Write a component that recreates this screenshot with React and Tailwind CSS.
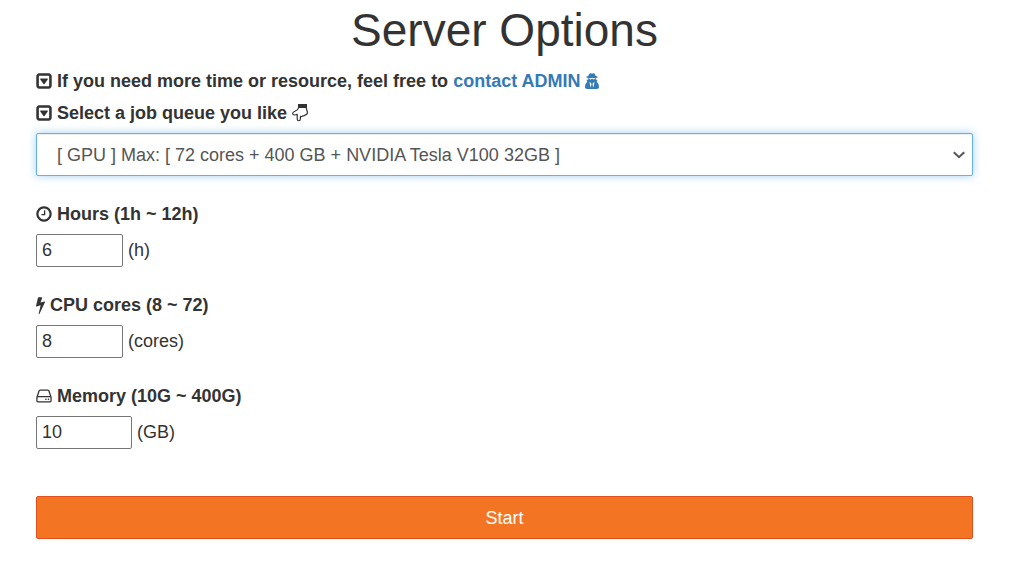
import { useState } from 'react';

// Icon outlines, drawn on a 1792 unit grid
const ICONS = {
    caret: {
        viewBox: '128 0 1536 1792',
        path: 'M1273 675q18 35-5 66l-320 448q-19 27-52 27t-52-27l-320-448q-23-31-5-66 17-35 57-35h640q40 0 57 35zm135 701v-960q0-14-9-23t-23-9h-960q-14 0-23 9t-9 23v960q0 14 9 23t23 9h960q14 0 23-9t9-23zm256-960v960q0 119-84.5 203.5t-203.5 84.5h-960q-119 0-203.5-84.5t-84.5-203.5v-960q0-119 84.5-203.5t203.5-84.5h960q119 0 203.5 84.5t84.5 203.5z',
    },
    clock: {
        viewBox: '128 0 1536 1792',
        path: 'M1024 544v448q0 14-9 23t-23 9h-320q-14 0-23-9t-9-23v-64q0-14 9-23t23-9h224v-352q0-14 9-23t23-9h64q14 0 23 9t9 23zm416 352q0-148-73-273t-198-198-273-73-273 73-198 198-73 273 73 273 198 198 273 73 273-73 198-198 73-273zm224 0q0 209-103 385.5t-279.5 279.5-385.5 103-385.5-103-279.5-279.5-103-385.5 103-385.5 279.5-279.5 385.5-103 385.5 103 279.5 279.5 103 385.5z',
    },
    bolt: {
        viewBox: '448 0 896 1792',
        path: 'M1333 566q18 20 7 44l-540 1157q-13 25-42 25-4 0-14-2-17-5-25.5-19t-4.5-30l197-808-406 101q-4 1-12 1-18 0-31-11-18-15-13-39l201-825q4-14 16-23t28-9h328q19 0 32 12.5t13 29.5q0 8-5 18l-171 463 396-98q8-2 12-2 19 0 34 15z',
    },
    drive: {
        viewBox: '128 0 1536 1792',
        path: 'M1168 1216q0 33-23.5 56.5t-56.5 23.5-56.5-23.5-23.5-56.5 23.5-56.5 56.5-23.5 56.5 23.5 23.5 56.5zm256 0q0 33-23.5 56.5t-56.5 23.5-56.5-23.5-23.5-56.5 23.5-56.5 56.5-23.5 56.5 23.5 23.5 56.5zm112 160v-320q0-13-9.5-22.5t-22.5-9.5h-1216q-13 0-22.5 9.5t-9.5 22.5v320q0 13 9.5 22.5t22.5 9.5h1216q13 0 22.5-9.5t9.5-22.5zm-1230-480h1180l-157-482q-4-13-16-21.5t-26-8.5h-782q-14 0-26 8.5t-16 21.5zm1358 160v320q0 66-47 113t-113 47h-1216q-66 0-113-47t-47-113v-320q0-25 16-75l197-606q17-53 63-86t101-33h782q55 0 101 33t63 86l197 606q16 50 16 75z',
    },
};

function Icon({ name, className = 'w-4' }) {
    const icon = ICONS[name];
    return (
        <svg viewBox={icon.viewBox} fill="currentColor" aria-hidden="true" className={`inline-block h-[18px] align-[-3px] ${className}`}>
            <path d={icon.path} />
        </svg>
    );
}

// Hat, glasses and a wide coat with an open collar
function Agent() {
    return (
        <svg viewBox="0 0 14 18" fill="currentColor" aria-hidden="true" className="inline-block h-[18px] w-3.5 align-[-3px]">
            <path d="M3.400 4C3.700 2.700 4.200 1.500 5 1.200c.7-.3 1.300.4 2 .4s1.300-.7 2-.4c.8.3 1.300 1.500 1.600 2.800 1.300.2 2.200.6 2.200 1.100s-.8.800-2 1c.1.6 0 1.200-.2 1.700H12.400l-.7 2.200c1.500.8 2.300 2.800 2.300 5 0 1.200-.9 2-2.100 2H2.100C.9 17 0 16.200 0 15c0-2.200.8-4.200 2.300-5L1.600 7.800h1.800c-.2-.5-.3-1.100-.2-1.700-1.200-.2-2-.5-2-1S2.100 4.200 3.400 4z" />
            <path d="M4.200 6.100h5.600c0 .8-.4 1.300-1.200 1.300S7.500 6.700 7.200 6.700h-.4c-.3 0-.3.7-1.200.7s-1.400-.5-1.400-1.300zM4.400 10l1.400.700.8 1.200-.9 3.800zM9.600 10l-1.400.700-.8 1.200.9 3.800z" fill="#fff" />
        </svg>
    );
}

function HandDown() {
    return (
        <svg viewBox="0 0 16 18" fill="none" stroke="currentColor" aria-hidden="true" className="inline-block h-[18px] w-4 align-[-3px]">
            <path d="M6 0h9v4H6z" fill="currentColor" stroke="none" />
            <path d="M6.500 3v1C6.200 5.600 4.700 6.500 2.900 7.300 1.200 8 .4 8.900.8 10c.6 1.400 2.600 1.100 4.400.3v4.500c0 2.600 3.200 2.600 3.200 0v-2.500c1 .4 2 .2 2.500-.6 1 .3 2 0 2.300-.9 1.400 0 2.200-.8 2.200-2.200 0-1.600-1-2.800-1-4.600V3" strokeWidth="1.200" strokeLinejoin="round" />
        </svg>
    );
}

function NumberField({ id, icon, iconClass, label, unit, min, max, inputClass, value, onChange }) {
    return (
        <div>
            <label htmlFor={id} className="mb-1 block font-bold leading-8">
                <Icon name={icon} className={iconClass} /> {label}
            </label>
            <div className="flex items-baseline gap-[5px]">
                <input
                    id={id}
                    type="number"
                    min={min}
                    max={max}
                    value={value}
                    onChange={(e) => onChange(e.target.value)}
                    className={`h-[33px] rounded-xs border border-[#767676] bg-white px-[5px] ${inputClass}`}
                />
                <span>{unit}</span>
            </div>
        </div>
    );
}

function App() {
    const [hours, setHours] = useState('6');
    const [cores, setCores] = useState('8');
    const [memory, setMemory] = useState('10');

    return (
        <main className="bg-white pr-[45px] pl-9 font-['Liberation_Sans',Arial,sans-serif] text-lg text-[#333]">
            <h1 className="mb-[5px] text-center text-[46px] leading-[60px]">Server Options</h1>

            <form onSubmit={(e) => e.preventDefault()}>
                <p className="font-bold leading-8">
                    <Icon name="caret" /> If you need more time or resource, feel free to{' '}
                    <a href="#contact" className="text-[#337ab7]">
                        contact ADMIN <Agent />
                    </a>
                </p>

                <label htmlFor="queue" className="mb-1 block font-bold leading-8">
                    <Icon name="caret" /> Select a job queue you like <HandDown />
                </label>
                <div className="grid items-center">
                    <select
                        id="queue"
                        className="col-start-1 row-start-1 h-[43px] w-full appearance-none rounded-xs border border-[#66afe9] bg-white px-5 text-[#555] shadow-[inset_0_1px_1px_rgba(0,0,0,0.075),0_0_8px_rgba(102,175,233,0.6)] outline-none"
                    >
                        <option>[ GPU ] Max: [ 72 cores + 400 GB + NVIDIA Tesla V100 32GB ]</option>
                    </select>
                    <svg viewBox="0 0 12 8" fill="none" stroke="#555" strokeWidth="2" aria-hidden="true" className="pointer-events-none col-start-1 row-start-1 mr-2 h-2 w-3 justify-self-end">
                        <path d="M.8 1.200L6 6.200l5.200-5" />
                    </svg>
                </div>

                <div className="mt-[22px] flex flex-col gap-[22px]">
                    <NumberField id="hours" icon="clock" label="Hours (1h ~ 12h)" unit="(h)" min="1" max="12" inputClass="w-[87px]" value={hours} onChange={setHours} />
                    <NumberField id="cores" icon="bolt" iconClass="w-[9px]" label="CPU cores (8 ~ 72)" unit="(cores)" min="8" max="72" inputClass="w-[87px]" value={cores} onChange={setCores} />
                    <NumberField id="memory" icon="drive" label="Memory (10G ~ 400G)" unit="(GB)" min="10" max="400" inputClass="w-24" value={memory} onChange={setMemory} />
                </div>

                <button type="submit" className="mt-[47px] h-[43px] w-full rounded-xs border border-[#e34f1c] bg-[#f37524] text-white">
                    Start
                </button>
            </form>
        </main>
    );
}

export default App;
